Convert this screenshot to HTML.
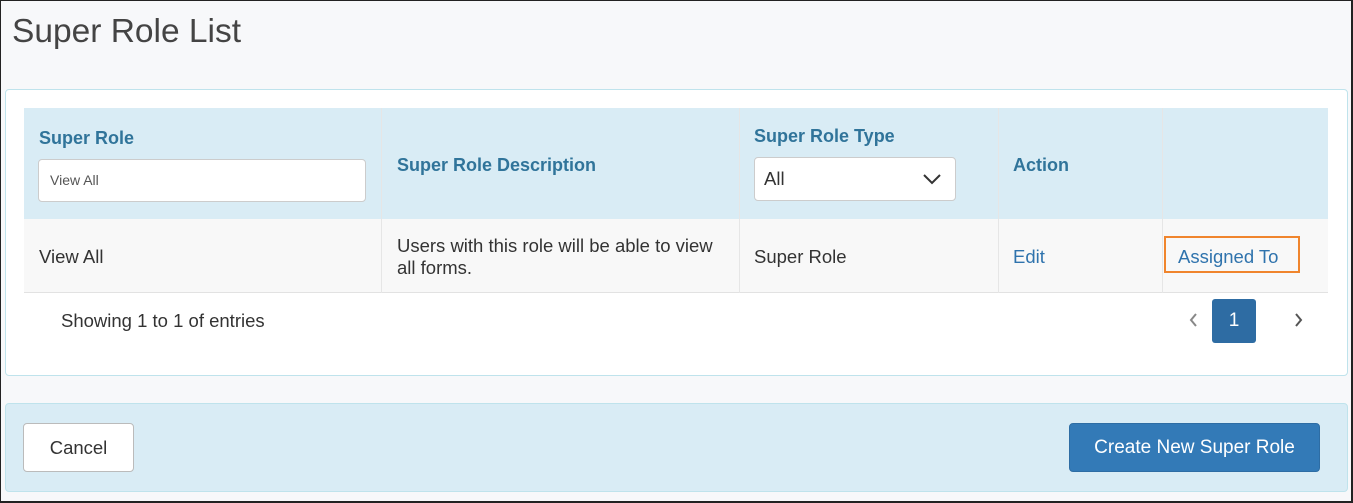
<!DOCTYPE html>
<html><head><style>
*{box-sizing:border-box;margin:0;padding:0}
body{width:1353px;height:503px;background:#fff;font-family:"Liberation Sans",Arial,sans-serif;position:relative;overflow:hidden}
.frame{position:absolute;left:0;top:0;width:1353px;height:503px;border:1px solid #222;border-right-width:2px;border-bottom-width:2px;background:#f7f8fa}
.abs{position:absolute}
h1{position:absolute;left:12px;top:13px;font-weight:normal;font-size:33.5px;color:#444}
.panel{left:5px;top:89px;width:1343px;height:287px;background:#fff;border:1px solid #bfe3ec;border-radius:4px}
.hd{top:108px;height:111px;background:#d9ecf5}
.rw{top:219px;height:74px;background:#f8f8f8;border-bottom:1px solid #e2e2e2}
.vl{width:1px;background:#e6e6e6;top:108px;height:185px}
.th{color:#30749a;font-weight:bold;font-size:18px}
.td{color:#333;font-size:18.5px}
.link{color:#2f73ad;font-size:18.5px}
.inp{background:#fff;border:1px solid #ccc;border-radius:4px}
.footer{left:5px;top:403px;width:1343px;height:89px;background:#d9ecf5;border:1px solid #bfe3ec;border-radius:4px}
</style></head><body>
<div class="frame"></div>
<h1>Super Role List</h1>
<div class="abs panel"></div>
<div class="abs hd" style="left:24px;width:1304px"></div>
<div class="abs rw" style="left:24px;width:1304px"></div>
<div class="abs vl" style="left:381px"></div>
<div class="abs vl" style="left:739px"></div>
<div class="abs vl" style="left:998px"></div>
<div class="abs vl" style="left:1162px"></div>
<div class="abs th" style="left:39px;top:128px">Super Role</div>
<div class="abs inp" style="left:38px;top:159px;width:328px;height:43px"></div>
<div class="abs" style="left:50px;top:172px;font-size:14px;color:#555">View All</div>
<div class="abs th" style="left:397px;top:155px">Super Role Description</div>
<div class="abs th" style="left:754px;top:126px">Super Role Type</div>
<div class="abs inp" style="left:754px;top:157px;width:202px;height:44px"></div>
<div class="abs td" style="left:764px;top:168px">All</div>
<svg class="abs" style="left:922px;top:172px" width="20" height="14"><path d="M2 3 L10 11 L18 3" fill="none" stroke="#333" stroke-width="2"/></svg>
<div class="abs th" style="left:1013px;top:155px">Action</div>
<div class="abs td" style="left:39px;top:246px">View All</div>
<div class="abs td" style="left:397px;top:235px;width:328px;line-height:22px">Users with this role will be able to view all forms.</div>
<div class="abs td" style="left:754px;top:246px">Super Role</div>
<div class="abs link" style="left:1013px;top:246px">Edit</div>
<div class="abs" style="left:1164px;top:236px;width:136px;height:37px;border:2px solid #f0852d"></div>
<div class="abs link" style="left:1178px;top:246px">Assigned To</div>
<div class="abs td" style="left:61px;top:310px">Showing 1 to 1 of entries</div>
<svg class="abs" style="left:1189px;top:312px" width="10" height="16"><path d="M7 2 L2 8 L7 14" fill="none" stroke="#888" stroke-width="2"/></svg>
<div class="abs" style="left:1212px;top:299px;width:44px;height:44px;background:#2e6ca3;border-radius:3px;color:#fff;font-size:19px;text-align:center;line-height:44px">1</div>
<svg class="abs" style="left:1294px;top:312px" width="10" height="16"><path d="M2 2 L7 8 L2 14" fill="none" stroke="#555" stroke-width="2"/></svg>
<div class="abs footer"></div>
<div class="abs" style="left:23px;top:423px;width:111px;height:49px;background:#fff;border:1px solid #bbb;border-radius:4px;text-align:center;line-height:47px;font-size:18.5px;color:#333">Cancel</div>
<div class="abs" style="left:1069px;top:423px;width:251px;height:49px;background:#337ab7;border:1px solid #2e6da4;border-radius:4px;text-align:center;line-height:47px;font-size:19px;color:#fff">Create New Super Role</div>
</body></html>
